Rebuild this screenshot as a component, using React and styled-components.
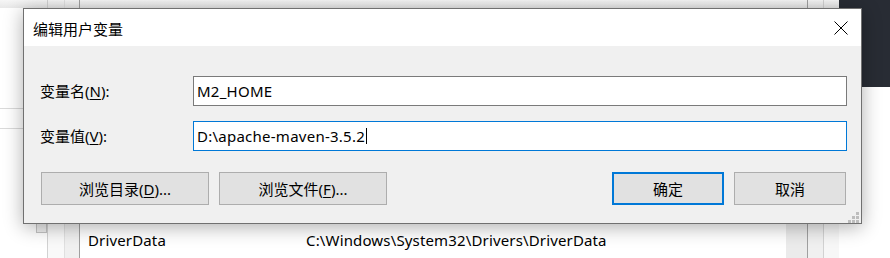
import React from "react";
import styled, { createGlobalStyle } from "styled-components";

const FONT = `"Noto Sans", "Noto Sans CJK SC", sans-serif`;

const Global = createGlobalStyle`
  html, body { margin: 0; padding: 0; background: #ffffff; }
  body { font-family: ${FONT}; }
  * { box-sizing: border-box; }
`;

const Desktop = styled.div`
  position: relative;
  width: 890px;
  height: 258px;
  overflow: hidden;
  background: #ffffff;
  font-family: ${FONT};
`;

/* ---------- background window ---------- */
const BgWindow = styled.div`
  display: flex;
  height: 258px;
`;

const BgColumn = styled.div`
  width: ${(p) => p.$w}px;
  flex: none;
  display: flex;
  flex-direction: column;
  border-left: ${(p) => (p.$line ? `1px solid ${p.$line}` : "none")};
  background: ${(p) => p.$bg || "#ffffff"};
`;

const BgHeader = styled.div`
  height: 8px;
  flex: none;
  background: linear-gradient(#f6f6f6, #e8e8e8);
`;

const BgBody = styled.div`
  flex: 1;
  display: flex;
  flex-direction: ${(p) => p.$dir || "column"};
`;

const HLine = styled.div`
  height: 1px;
  flex: none;
  background: #dadada;
  margin-top: ${(p) => p.$mt}px;
`;

const CornerBox = styled.div`
  align-self: flex-end;
  width: 11px;
  height: 9px;
  margin-top: ${(p) => p.$mt}px;
  border: 1px solid #c4c4c4;
  border-top: none;
  background: #efefef;
`;

const ListArea = styled.div`
  flex: 1;
  padding-top: 221px;
  background: #ffffff;
`;

const ListRow = styled.div`
  display: grid;
  grid-template-columns: 218px 1fr;
  height: 22px;
  align-items: center;
  padding-left: 8px;
  font-size: 15px;
  line-height: 22px;
  letter-spacing: 0.15px;
  color: #000;
  white-space: nowrap;
`;

const ScrollTrack = styled.div`
  width: 21px;
  flex: none;
  background: #ebebeb;
`;

const DarkBlock = styled.div`
  height: 87px;
  flex: none;
  background: #282c34;
`;

/* ---------- dialog ---------- */
const Dialog = styled.div`
  position: absolute;
  left: 23px;
  top: 8px;
  width: 839px;
  height: 216px;
  border: 1px solid #707070;
  background: #f0f0f0;
  display: flex;
  flex-direction: column;
  box-shadow: 0 3px 18px rgba(0, 0, 0, 0.32);
`;

const TitleBar = styled.div`
  height: 37px;
  flex: none;
  background: #ffffff;
  display: flex;
  align-items: center;
  justify-content: space-between;
  padding: 0 13px 0 9px;
`;

const Title = styled.div`
  font-size: 15px;
  line-height: 20px;
  color: #000;
  padding-top: 2px;
`;

const CloseButton = styled.div`
  width: 14px;
  height: 14px;
  display: flex;
  margin-top: 1px;
`;

const Body = styled.div`
  position: relative;
  flex: 1;
  padding: 30px 14px 18px 16px;
  display: flex;
  flex-direction: column;
`;

const Form = styled.div`
  display: grid;
  grid-template-columns: 153px 1fr;
  grid-auto-rows: 30px;
  row-gap: 15px;
  align-items: center;
`;

const Label = styled.div`
  font-size: 15px;
  line-height: 20px;
  color: #000;
  white-space: nowrap;
`;

const Mnemonic = styled.span`
  text-decoration: underline;
  text-underline-offset: 2px;
  text-decoration-thickness: 1px;
`;

const TextField = styled.div`
  height: 30px;
  border: 1px solid ${(p) => (p.$focused ? "#0078d7" : "#7a7a7a")};
  background: #ffffff;
  display: flex;
  align-items: center;
  padding-left: 3px;
  font-size: 15px;
  line-height: 20px;
  letter-spacing: 0.25px;
  color: #000;
  white-space: nowrap;
`;

const Caret = styled.span`
  display: inline-block;
  width: 1px;
  height: 16px;
  margin-left: 1px;
  background: #000;
`;

const ButtonRow = styled.div`
  margin-top: 21px;
  padding: 0 1px;
  display: flex;
  justify-content: space-between;
`;

const ButtonGroup = styled.div`
  display: flex;
  gap: 10px;
`;

const Button = styled.div`
  width: ${(p) => p.$w}px;
  height: 33px;
  border: ${(p) => (p.$default ? "2px solid #0078d7" : "1px solid #adadad")};
  background: #e1e1e1;
  display: flex;
  align-items: center;
  justify-content: center;
  font-size: 15px;
  line-height: 20px;
  color: #000;
  white-space: nowrap;
`;

const Grip = styled.div`
  position: absolute;
  right: 2px;
  bottom: 0px;
  width: 11px;
  height: 11px;
  display: grid;
  grid-template-columns: repeat(3, 3px);
  grid-template-rows: repeat(3, 3px);
  gap: 1px;
`;

const GripDot = styled.span`
  background: ${(p) => (p.$on ? "#bdbdbd" : "transparent")};
`;

const gripPattern = [0, 0, 1, 0, 1, 1, 1, 1, 1];

export default function App() {
  return (
    <>
      <Global />
      <Desktop>
        <BgWindow>
          <BgColumn $w={47}>
            <BgHeader />
            <BgBody>
              <HLine $mt={100} />
              <HLine $mt={19} />
              <CornerBox $mt={95} />
            </BgBody>
          </BgColumn>
          <BgColumn $w={17} $line="#d2d2d2" $bg="#f9f9f9">
            <BgHeader />
          </BgColumn>
          <BgColumn $w={15} $line="#e0e0e0" $bg="#f0f0f0">
            <BgHeader />
          </BgColumn>
          <BgColumn $w={728} $line="#a0a0a0">
            <BgHeader />
            <BgBody $dir="row">
              <ListArea>
                <ListRow>
                  <span>DriverData</span>
                  <span>C:\Windows\System32\Drivers\DriverData</span>
                </ListRow>
              </ListArea>
              <ScrollTrack />
            </BgBody>
          </BgColumn>
          <BgColumn $w={16} $line="#a0a0a0" $bg="#f0f0f0">
            <BgHeader />
          </BgColumn>
          <BgColumn $w={16} $line="#d2d2d2" $bg="#f7f7f7">
            <BgHeader />
          </BgColumn>
          <BgColumn $w={51}>
            <DarkBlock />
          </BgColumn>
        </BgWindow>

        <Dialog>
          <TitleBar>
            <Title>编辑用户变量</Title>
            <CloseButton>
              <svg width="14" height="14" viewBox="0 0 14 14">
                <path d="M0.5 0.5 L13.5 13.5 M13.5 0.5 L0.5 13.5" stroke="#000" strokeWidth="1" fill="none" />
              </svg>
            </CloseButton>
          </TitleBar>
          <Body>
            <Form>
              <Label>
                变量名(<Mnemonic>N</Mnemonic>):
              </Label>
              <TextField>M2_HOME</TextField>
              <Label>
                变量值(<Mnemonic>V</Mnemonic>):
              </Label>
              <TextField $focused>
                D:\apache-maven-3.5.2
                <Caret />
              </TextField>
            </Form>
            <ButtonRow>
              <ButtonGroup>
                <Button $w={168}>
                  浏览目录(<Mnemonic>D</Mnemonic>)...
                </Button>
                <Button $w={168}>
                  浏览文件(<Mnemonic>F</Mnemonic>)...
                </Button>
              </ButtonGroup>
              <ButtonGroup>
                <Button $w={112} $default>
                  确定
                </Button>
                <Button $w={112}>取消</Button>
              </ButtonGroup>
            </ButtonRow>
            <Grip>
              {gripPattern.map((on, i) => (
                <GripDot key={i} $on={on} />
              ))}
            </Grip>
          </Body>
        </Dialog>
      </Desktop>
    </>
  );
}
